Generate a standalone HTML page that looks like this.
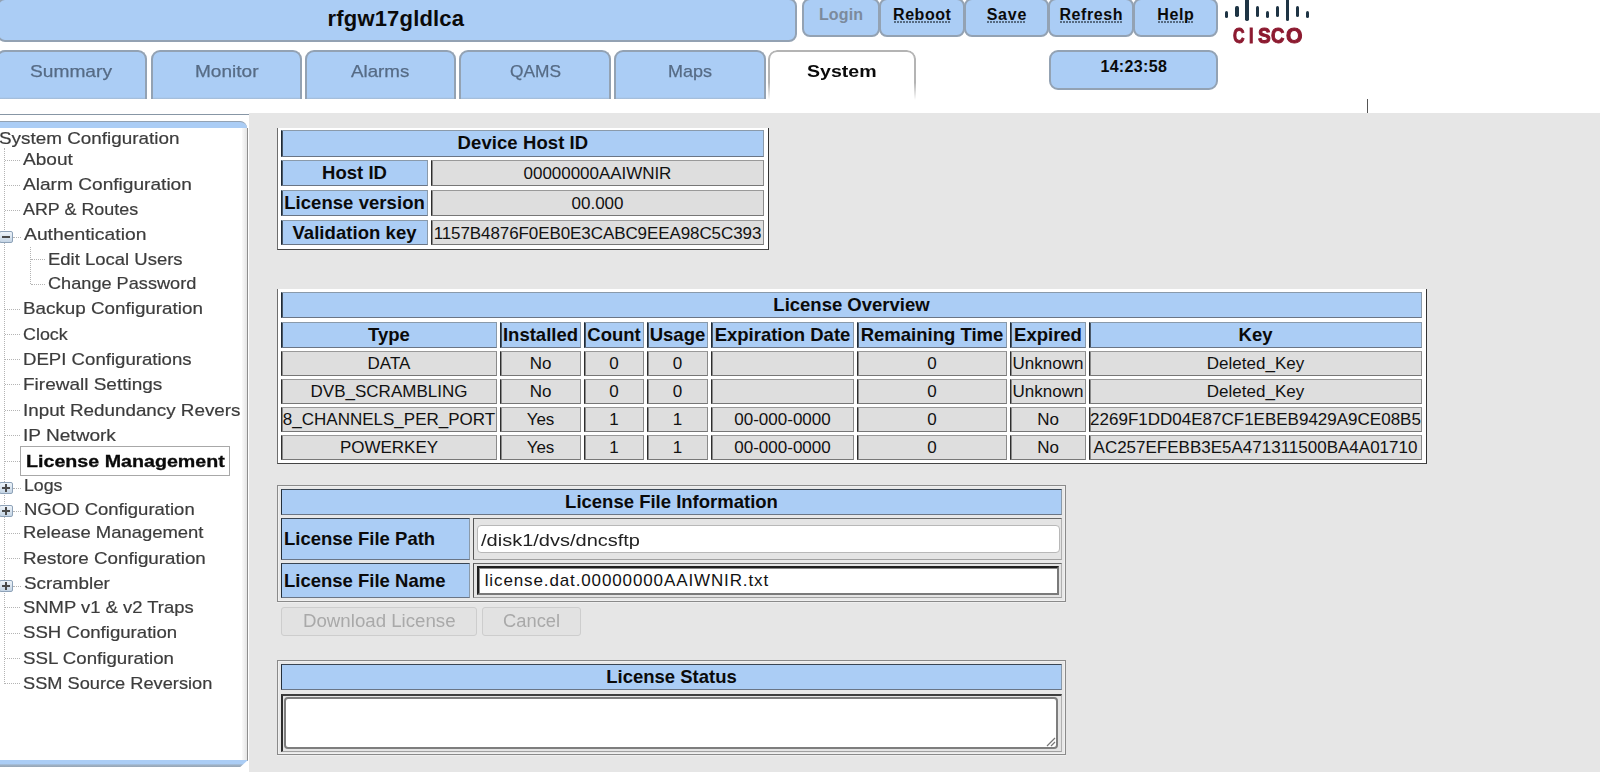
<!DOCTYPE html>
<html><head><meta charset="utf-8"><style>
html,body{margin:0;padding:0;}
body{width:1600px;height:772px;overflow:hidden;position:relative;background:#fff;font-family:"Liberation Sans", sans-serif;}
</style></head><body>
<div style="position:absolute;left:249px;top:113px;width:1351px;height:659px;box-sizing:border-box;background:#e6e6e6"></div>
<div style="position:absolute;left:-3px;top:-2px;width:800px;height:44px;box-sizing:border-box;background:#abcdf5;border:2px solid #93a2b3;border-radius:8px"></div>
<div style="position:absolute;left:802px;top:-2px;width:78px;height:39px;box-sizing:border-box;background:#abcdf5;border:2px solid #93a2b3;border-radius:8px"></div>
<div style="position:absolute;left:879px;top:-2px;width:86px;height:39px;box-sizing:border-box;background:#abcdf5;border:2px solid #93a2b3;border-radius:8px"></div>
<div style="position:absolute;left:894px;top:21px;width:57px;height:2px;background-image:linear-gradient(90deg,#3a4a5c 0,#3a4a5c 2px,transparent 2px);background-size:3px 2px;opacity:0.75"></div>
<div style="position:absolute;left:964px;top:-2px;width:85px;height:39px;box-sizing:border-box;background:#abcdf5;border:2px solid #93a2b3;border-radius:8px"></div>
<div style="position:absolute;left:987px;top:21px;width:39px;height:2px;background-image:linear-gradient(90deg,#3a4a5c 0,#3a4a5c 2px,transparent 2px);background-size:3px 2px;opacity:0.75"></div>
<div style="position:absolute;left:1048px;top:-2px;width:86px;height:39px;box-sizing:border-box;background:#abcdf5;border:2px solid #93a2b3;border-radius:8px"></div>
<div style="position:absolute;left:1060px;top:21px;width:62px;height:2px;background-image:linear-gradient(90deg,#3a4a5c 0,#3a4a5c 2px,transparent 2px);background-size:3px 2px;opacity:0.75"></div>
<div style="position:absolute;left:1133px;top:-2px;width:85px;height:39px;box-sizing:border-box;background:#abcdf5;border:2px solid #93a2b3;border-radius:8px"></div>
<div style="position:absolute;left:1158px;top:21px;width:36px;height:2px;background-image:linear-gradient(90deg,#3a4a5c 0,#3a4a5c 2px,transparent 2px);background-size:3px 2px;opacity:0.75"></div>
<div style="position:absolute;left:1049px;top:50px;width:169px;height:40px;box-sizing:border-box;background:#abcdf5;border:2px solid #93a2b3;border-radius:9px"></div>
<div style="position:absolute;left:1224.8px;top:11px;width:3.4px;height:6.5px;background:#1e3444;border-radius:1.7px"></div>
<div style="position:absolute;left:1235.3999999999999px;top:6.2px;width:3.4px;height:11.3px;background:#1e3444;border-radius:1.7px"></div>
<div style="position:absolute;left:1245.3999999999999px;top:-1px;width:3.4px;height:21.8px;background:#1e3444;border-radius:1.7px"></div>
<div style="position:absolute;left:1255.7px;top:6.2px;width:3.4px;height:11.3px;background:#1e3444;border-radius:1.7px"></div>
<div style="position:absolute;left:1265.7px;top:11px;width:3.4px;height:6.5px;background:#1e3444;border-radius:1.7px"></div>
<div style="position:absolute;left:1276.0px;top:6.2px;width:3.4px;height:11.3px;background:#1e3444;border-radius:1.7px"></div>
<div style="position:absolute;left:1286.0px;top:-1px;width:3.4px;height:21.8px;background:#1e3444;border-radius:1.7px"></div>
<div style="position:absolute;left:1295.8999999999999px;top:6.2px;width:3.4px;height:11.3px;background:#1e3444;border-radius:1.7px"></div>
<div style="position:absolute;left:1305.8999999999999px;top:11px;width:3.4px;height:6.5px;background:#1e3444;border-radius:1.7px"></div>
<div style="position:absolute;left:-4px;top:50px;width:151px;height:49px;box-sizing:border-box;background:linear-gradient(#abcdf5 0,#abcdf5 96%,#a3b9d2 100%);border:2px solid #93a2b3;border-bottom:none;border-radius:9px 9px 0 0"></div>
<div style="position:absolute;left:151px;top:50px;width:151px;height:49px;box-sizing:border-box;background:linear-gradient(#abcdf5 0,#abcdf5 96%,#a3b9d2 100%);border:2px solid #93a2b3;border-bottom:none;border-radius:9px 9px 0 0"></div>
<div style="position:absolute;left:305px;top:50px;width:151px;height:49px;box-sizing:border-box;background:linear-gradient(#abcdf5 0,#abcdf5 96%,#a3b9d2 100%);border:2px solid #93a2b3;border-bottom:none;border-radius:9px 9px 0 0"></div>
<div style="position:absolute;left:459px;top:50px;width:152px;height:49px;box-sizing:border-box;background:linear-gradient(#abcdf5 0,#abcdf5 96%,#a3b9d2 100%);border:2px solid #93a2b3;border-bottom:none;border-radius:9px 9px 0 0"></div>
<div style="position:absolute;left:614px;top:50px;width:152px;height:49px;box-sizing:border-box;background:linear-gradient(#abcdf5 0,#abcdf5 96%,#a3b9d2 100%);border:2px solid #93a2b3;border-bottom:none;border-radius:9px 9px 0 0"></div>
<div style="position:absolute;left:768px;top:50px;width:148px;height:50px;box-sizing:border-box;background:#fff;border:2px solid #b4b4b4;border-bottom:none;border-radius:9px 9px 0 0;-webkit-mask-image:linear-gradient(#000 65%,transparent 100%)"></div>
<div style="position:absolute;left:1367px;top:99px;width:1px;height:14px;box-sizing:border-box;background:#555"></div>
<div style="position:absolute;left:-2px;top:114px;width:251px;height:1px;box-sizing:border-box;background:#8796a5"></div>
<div style="position:absolute;left:-10px;top:121px;width:257px;height:7px;box-sizing:border-box;background:#abcdf5;border-top:1px solid #93a2b3;border-radius:0 7px 0 0"></div>
<div style="position:absolute;left:242px;top:128px;width:5px;height:633px;box-sizing:border-box;background:linear-gradient(90deg,#fafafa,#e4e4e4)"></div>
<div style="position:absolute;left:247px;top:128px;width:1px;height:633px;box-sizing:border-box;background:#8e8e8e"></div>
<div style="position:absolute;left:-10px;top:760px;width:258px;height:7px;background:linear-gradient(#abcdf5 0,#abcdf5 55%,#9fb2c6 70%,#97a6b6 100%);clip-path:polygon(0 0,100% 0,97% 100%,0 100%)"></div>
<div style="position:absolute;left:4px;top:148px;width:0;height:536px;border-left:1px dotted #b4b4b4"></div>
<div style="position:absolute;left:5px;top:159.5px;width:15px;height:0;border-top:1px dotted #b4b4b4"></div>
<div style="position:absolute;left:5px;top:184.60000000000002px;width:15px;height:0;border-top:1px dotted #b4b4b4"></div>
<div style="position:absolute;left:5px;top:209.70000000000002px;width:15px;height:0;border-top:1px dotted #b4b4b4"></div>
<div style="position:absolute;left:-1px;top:230.8px;width:14px;height:12px;box-sizing:border-box;border:1px solid #8ea2b8;border-radius:2px;background:linear-gradient(#eef4fa,#c4d4e4)"></div>
<div style="position:absolute;left:2px;top:235.8px;width:8px;height:2px;background:#4a4a4a"></div>
<div style="position:absolute;left:13px;top:236.8px;width:8px;height:0;border-top:1px dotted #b4b4b4"></div>
<div style="position:absolute;left:31px;top:259.1px;width:14px;height:0;border-top:1px dotted #b4b4b4"></div>
<div style="position:absolute;left:31px;top:283.7px;width:14px;height:0;border-top:1px dotted #b4b4b4"></div>
<div style="position:absolute;left:5px;top:308.8px;width:15px;height:0;border-top:1px dotted #b4b4b4"></div>
<div style="position:absolute;left:5px;top:334.3px;width:15px;height:0;border-top:1px dotted #b4b4b4"></div>
<div style="position:absolute;left:5px;top:359.0px;width:15px;height:0;border-top:1px dotted #b4b4b4"></div>
<div style="position:absolute;left:5px;top:384.1px;width:15px;height:0;border-top:1px dotted #b4b4b4"></div>
<div style="position:absolute;left:5px;top:410.3px;width:15px;height:0;border-top:1px dotted #b4b4b4"></div>
<div style="position:absolute;left:5px;top:435.40000000000003px;width:15px;height:0;border-top:1px dotted #b4b4b4"></div>
<div style="position:absolute;left:5px;top:460.5px;width:15px;height:0;border-top:1px dotted #b4b4b4"></div>
<div style="position:absolute;left:20px;top:446px;width:210px;height:30px;box-sizing:border-box;border:1px solid #a8a8a8;background:#fff"></div>
<div style="position:absolute;left:-1px;top:481.6px;width:14px;height:12px;box-sizing:border-box;border:1px solid #8ea2b8;border-radius:2px;background:linear-gradient(#eef4fa,#c4d4e4)"></div>
<div style="position:absolute;left:2px;top:486.6px;width:8px;height:2px;background:#4a4a4a"></div>
<div style="position:absolute;left:5px;top:483.6px;width:2px;height:8px;background:#4a4a4a"></div>
<div style="position:absolute;left:13px;top:487.6px;width:8px;height:0;border-top:1px dotted #b4b4b4"></div>
<div style="position:absolute;left:-1px;top:505.0999999999999px;width:14px;height:12px;box-sizing:border-box;border:1px solid #8ea2b8;border-radius:2px;background:linear-gradient(#eef4fa,#c4d4e4)"></div>
<div style="position:absolute;left:2px;top:510.0999999999999px;width:8px;height:2px;background:#4a4a4a"></div>
<div style="position:absolute;left:5px;top:507.0999999999999px;width:2px;height:8px;background:#4a4a4a"></div>
<div style="position:absolute;left:13px;top:511.0999999999999px;width:8px;height:0;border-top:1px dotted #b4b4b4"></div>
<div style="position:absolute;left:5px;top:532.9px;width:15px;height:0;border-top:1px dotted #b4b4b4"></div>
<div style="position:absolute;left:5px;top:558.0px;width:15px;height:0;border-top:1px dotted #b4b4b4"></div>
<div style="position:absolute;left:-1px;top:579.5999999999999px;width:14px;height:12px;box-sizing:border-box;border:1px solid #8ea2b8;border-radius:2px;background:linear-gradient(#eef4fa,#c4d4e4)"></div>
<div style="position:absolute;left:2px;top:584.5999999999999px;width:8px;height:2px;background:#4a4a4a"></div>
<div style="position:absolute;left:5px;top:581.5999999999999px;width:2px;height:8px;background:#4a4a4a"></div>
<div style="position:absolute;left:13px;top:585.5999999999999px;width:8px;height:0;border-top:1px dotted #b4b4b4"></div>
<div style="position:absolute;left:5px;top:607.3px;width:15px;height:0;border-top:1px dotted #b4b4b4"></div>
<div style="position:absolute;left:5px;top:632.6999999999999px;width:15px;height:0;border-top:1px dotted #b4b4b4"></div>
<div style="position:absolute;left:5px;top:658.0999999999999px;width:15px;height:0;border-top:1px dotted #b4b4b4"></div>
<div style="position:absolute;left:5px;top:683.1999999999999px;width:15px;height:0;border-top:1px dotted #b4b4b4"></div>
<div style="position:absolute;left:30px;top:247px;width:0;height:37px;border-left:1px dotted #b4b4b4"></div>
<div style="position:absolute;left:277px;top:128px;width:492px;height:122px;box-sizing:border-box;background:#fff;border-left:1px solid #6e6e6e;border-right:1px solid #333;border-bottom:1px solid #444"></div>
<div style="position:absolute;left:281px;top:130px;width:483px;height:27px;box-sizing:border-box;background:#abcdf5;border-left:1px solid #1e2a36;border-top:1px solid #8a9aaa;border-right:1px solid #8a9aaa;border-bottom:1px solid #6a7585;box-shadow:inset 1px 0 0 #4a5868"></div>
<div style="position:absolute;left:281px;top:160px;width:147px;height:26px;box-sizing:border-box;background:#abcdf5;border-left:1px solid #1e2a36;border-top:1px solid #8a9aaa;border-right:1px solid #8a9aaa;border-bottom:1px solid #6a7585;box-shadow:inset 1px 0 0 #4a5868"></div>
<div style="position:absolute;left:431px;top:160px;width:333px;height:26px;box-sizing:border-box;background:#dedede;border-left:1px solid #2e2e2e;border-top:1px solid #999;border-right:1px solid #8a8a8a;border-bottom:1px solid #777;box-shadow:inset 1px 0 0 #8a8a8a"></div>
<div style="position:absolute;left:281px;top:190px;width:147px;height:26px;box-sizing:border-box;background:#abcdf5;border-left:1px solid #1e2a36;border-top:1px solid #8a9aaa;border-right:1px solid #8a9aaa;border-bottom:1px solid #6a7585;box-shadow:inset 1px 0 0 #4a5868"></div>
<div style="position:absolute;left:431px;top:190px;width:333px;height:26px;box-sizing:border-box;background:#dedede;border-left:1px solid #2e2e2e;border-top:1px solid #999;border-right:1px solid #8a8a8a;border-bottom:1px solid #777;box-shadow:inset 1px 0 0 #8a8a8a"></div>
<div style="position:absolute;left:281px;top:220px;width:147px;height:25px;box-sizing:border-box;background:#abcdf5;border-left:1px solid #1e2a36;border-top:1px solid #8a9aaa;border-right:1px solid #8a9aaa;border-bottom:1px solid #6a7585;box-shadow:inset 1px 0 0 #4a5868"></div>
<div style="position:absolute;left:431px;top:220px;width:333px;height:25px;box-sizing:border-box;background:#dedede;border-left:1px solid #2e2e2e;border-top:1px solid #999;border-right:1px solid #8a8a8a;border-bottom:1px solid #777;box-shadow:inset 1px 0 0 #8a8a8a"></div>
<div style="position:absolute;left:277px;top:289px;width:1150px;height:175px;box-sizing:border-box;background:#fff;border-left:1px solid #6e6e6e;border-right:1px solid #333;border-bottom:1px solid #444"></div>
<div style="position:absolute;left:281px;top:292px;width:1141px;height:26px;box-sizing:border-box;background:#abcdf5;border-left:1px solid #1e2a36;border-top:1px solid #8a9aaa;border-right:1px solid #8a9aaa;border-bottom:1px solid #6a7585;box-shadow:inset 1px 0 0 #4a5868"></div>
<div style="position:absolute;left:281px;top:322px;width:216px;height:26px;box-sizing:border-box;background:#abcdf5;border-left:1px solid #1e2a36;border-top:1px solid #8a9aaa;border-right:1px solid #8a9aaa;border-bottom:1px solid #6a7585;box-shadow:inset 1px 0 0 #4a5868"></div>
<div style="position:absolute;left:500px;top:322px;width:81px;height:26px;box-sizing:border-box;background:#abcdf5;border-left:1px solid #1e2a36;border-top:1px solid #8a9aaa;border-right:1px solid #8a9aaa;border-bottom:1px solid #6a7585;box-shadow:inset 1px 0 0 #4a5868"></div>
<div style="position:absolute;left:584px;top:322px;width:60px;height:26px;box-sizing:border-box;background:#abcdf5;border-left:1px solid #1e2a36;border-top:1px solid #8a9aaa;border-right:1px solid #8a9aaa;border-bottom:1px solid #6a7585;box-shadow:inset 1px 0 0 #4a5868"></div>
<div style="position:absolute;left:647px;top:322px;width:61px;height:26px;box-sizing:border-box;background:#abcdf5;border-left:1px solid #1e2a36;border-top:1px solid #8a9aaa;border-right:1px solid #8a9aaa;border-bottom:1px solid #6a7585;box-shadow:inset 1px 0 0 #4a5868"></div>
<div style="position:absolute;left:711px;top:322px;width:143px;height:26px;box-sizing:border-box;background:#abcdf5;border-left:1px solid #1e2a36;border-top:1px solid #8a9aaa;border-right:1px solid #8a9aaa;border-bottom:1px solid #6a7585;box-shadow:inset 1px 0 0 #4a5868"></div>
<div style="position:absolute;left:857px;top:322px;width:150px;height:26px;box-sizing:border-box;background:#abcdf5;border-left:1px solid #1e2a36;border-top:1px solid #8a9aaa;border-right:1px solid #8a9aaa;border-bottom:1px solid #6a7585;box-shadow:inset 1px 0 0 #4a5868"></div>
<div style="position:absolute;left:1010px;top:322px;width:76px;height:26px;box-sizing:border-box;background:#abcdf5;border-left:1px solid #1e2a36;border-top:1px solid #8a9aaa;border-right:1px solid #8a9aaa;border-bottom:1px solid #6a7585;box-shadow:inset 1px 0 0 #4a5868"></div>
<div style="position:absolute;left:1089px;top:322px;width:333px;height:26px;box-sizing:border-box;background:#abcdf5;border-left:1px solid #1e2a36;border-top:1px solid #8a9aaa;border-right:1px solid #8a9aaa;border-bottom:1px solid #6a7585;box-shadow:inset 1px 0 0 #4a5868"></div>
<div style="position:absolute;left:281px;top:351px;width:216px;height:25px;box-sizing:border-box;background:#dedede;border-left:1px solid #2e2e2e;border-top:1px solid #999;border-right:1px solid #8a8a8a;border-bottom:1px solid #777;box-shadow:inset 1px 0 0 #8a8a8a"></div>
<div style="position:absolute;left:500px;top:351px;width:81px;height:25px;box-sizing:border-box;background:#dedede;border-left:1px solid #2e2e2e;border-top:1px solid #999;border-right:1px solid #8a8a8a;border-bottom:1px solid #777;box-shadow:inset 1px 0 0 #8a8a8a"></div>
<div style="position:absolute;left:584px;top:351px;width:60px;height:25px;box-sizing:border-box;background:#dedede;border-left:1px solid #2e2e2e;border-top:1px solid #999;border-right:1px solid #8a8a8a;border-bottom:1px solid #777;box-shadow:inset 1px 0 0 #8a8a8a"></div>
<div style="position:absolute;left:647px;top:351px;width:61px;height:25px;box-sizing:border-box;background:#dedede;border-left:1px solid #2e2e2e;border-top:1px solid #999;border-right:1px solid #8a8a8a;border-bottom:1px solid #777;box-shadow:inset 1px 0 0 #8a8a8a"></div>
<div style="position:absolute;left:711px;top:351px;width:143px;height:25px;box-sizing:border-box;background:#dedede;border-left:1px solid #2e2e2e;border-top:1px solid #999;border-right:1px solid #8a8a8a;border-bottom:1px solid #777;box-shadow:inset 1px 0 0 #8a8a8a"></div>
<div style="position:absolute;left:857px;top:351px;width:150px;height:25px;box-sizing:border-box;background:#dedede;border-left:1px solid #2e2e2e;border-top:1px solid #999;border-right:1px solid #8a8a8a;border-bottom:1px solid #777;box-shadow:inset 1px 0 0 #8a8a8a"></div>
<div style="position:absolute;left:1010px;top:351px;width:76px;height:25px;box-sizing:border-box;background:#dedede;border-left:1px solid #2e2e2e;border-top:1px solid #999;border-right:1px solid #8a8a8a;border-bottom:1px solid #777;box-shadow:inset 1px 0 0 #8a8a8a"></div>
<div style="position:absolute;left:1089px;top:351px;width:333px;height:25px;box-sizing:border-box;background:#dedede;border-left:1px solid #2e2e2e;border-top:1px solid #999;border-right:1px solid #8a8a8a;border-bottom:1px solid #777;box-shadow:inset 1px 0 0 #8a8a8a"></div>
<div style="position:absolute;left:281px;top:379px;width:216px;height:25px;box-sizing:border-box;background:#dedede;border-left:1px solid #2e2e2e;border-top:1px solid #999;border-right:1px solid #8a8a8a;border-bottom:1px solid #777;box-shadow:inset 1px 0 0 #8a8a8a"></div>
<div style="position:absolute;left:500px;top:379px;width:81px;height:25px;box-sizing:border-box;background:#dedede;border-left:1px solid #2e2e2e;border-top:1px solid #999;border-right:1px solid #8a8a8a;border-bottom:1px solid #777;box-shadow:inset 1px 0 0 #8a8a8a"></div>
<div style="position:absolute;left:584px;top:379px;width:60px;height:25px;box-sizing:border-box;background:#dedede;border-left:1px solid #2e2e2e;border-top:1px solid #999;border-right:1px solid #8a8a8a;border-bottom:1px solid #777;box-shadow:inset 1px 0 0 #8a8a8a"></div>
<div style="position:absolute;left:647px;top:379px;width:61px;height:25px;box-sizing:border-box;background:#dedede;border-left:1px solid #2e2e2e;border-top:1px solid #999;border-right:1px solid #8a8a8a;border-bottom:1px solid #777;box-shadow:inset 1px 0 0 #8a8a8a"></div>
<div style="position:absolute;left:711px;top:379px;width:143px;height:25px;box-sizing:border-box;background:#dedede;border-left:1px solid #2e2e2e;border-top:1px solid #999;border-right:1px solid #8a8a8a;border-bottom:1px solid #777;box-shadow:inset 1px 0 0 #8a8a8a"></div>
<div style="position:absolute;left:857px;top:379px;width:150px;height:25px;box-sizing:border-box;background:#dedede;border-left:1px solid #2e2e2e;border-top:1px solid #999;border-right:1px solid #8a8a8a;border-bottom:1px solid #777;box-shadow:inset 1px 0 0 #8a8a8a"></div>
<div style="position:absolute;left:1010px;top:379px;width:76px;height:25px;box-sizing:border-box;background:#dedede;border-left:1px solid #2e2e2e;border-top:1px solid #999;border-right:1px solid #8a8a8a;border-bottom:1px solid #777;box-shadow:inset 1px 0 0 #8a8a8a"></div>
<div style="position:absolute;left:1089px;top:379px;width:333px;height:25px;box-sizing:border-box;background:#dedede;border-left:1px solid #2e2e2e;border-top:1px solid #999;border-right:1px solid #8a8a8a;border-bottom:1px solid #777;box-shadow:inset 1px 0 0 #8a8a8a"></div>
<div style="position:absolute;left:281px;top:407px;width:216px;height:25px;box-sizing:border-box;background:#dedede;border-left:1px solid #2e2e2e;border-top:1px solid #999;border-right:1px solid #8a8a8a;border-bottom:1px solid #777;box-shadow:inset 1px 0 0 #8a8a8a"></div>
<div style="position:absolute;left:500px;top:407px;width:81px;height:25px;box-sizing:border-box;background:#dedede;border-left:1px solid #2e2e2e;border-top:1px solid #999;border-right:1px solid #8a8a8a;border-bottom:1px solid #777;box-shadow:inset 1px 0 0 #8a8a8a"></div>
<div style="position:absolute;left:584px;top:407px;width:60px;height:25px;box-sizing:border-box;background:#dedede;border-left:1px solid #2e2e2e;border-top:1px solid #999;border-right:1px solid #8a8a8a;border-bottom:1px solid #777;box-shadow:inset 1px 0 0 #8a8a8a"></div>
<div style="position:absolute;left:647px;top:407px;width:61px;height:25px;box-sizing:border-box;background:#dedede;border-left:1px solid #2e2e2e;border-top:1px solid #999;border-right:1px solid #8a8a8a;border-bottom:1px solid #777;box-shadow:inset 1px 0 0 #8a8a8a"></div>
<div style="position:absolute;left:711px;top:407px;width:143px;height:25px;box-sizing:border-box;background:#dedede;border-left:1px solid #2e2e2e;border-top:1px solid #999;border-right:1px solid #8a8a8a;border-bottom:1px solid #777;box-shadow:inset 1px 0 0 #8a8a8a"></div>
<div style="position:absolute;left:857px;top:407px;width:150px;height:25px;box-sizing:border-box;background:#dedede;border-left:1px solid #2e2e2e;border-top:1px solid #999;border-right:1px solid #8a8a8a;border-bottom:1px solid #777;box-shadow:inset 1px 0 0 #8a8a8a"></div>
<div style="position:absolute;left:1010px;top:407px;width:76px;height:25px;box-sizing:border-box;background:#dedede;border-left:1px solid #2e2e2e;border-top:1px solid #999;border-right:1px solid #8a8a8a;border-bottom:1px solid #777;box-shadow:inset 1px 0 0 #8a8a8a"></div>
<div style="position:absolute;left:1089px;top:407px;width:333px;height:25px;box-sizing:border-box;background:#dedede;border-left:1px solid #2e2e2e;border-top:1px solid #999;border-right:1px solid #8a8a8a;border-bottom:1px solid #777;box-shadow:inset 1px 0 0 #8a8a8a"></div>
<div style="position:absolute;left:281px;top:435px;width:216px;height:25px;box-sizing:border-box;background:#dedede;border-left:1px solid #2e2e2e;border-top:1px solid #999;border-right:1px solid #8a8a8a;border-bottom:1px solid #777;box-shadow:inset 1px 0 0 #8a8a8a"></div>
<div style="position:absolute;left:500px;top:435px;width:81px;height:25px;box-sizing:border-box;background:#dedede;border-left:1px solid #2e2e2e;border-top:1px solid #999;border-right:1px solid #8a8a8a;border-bottom:1px solid #777;box-shadow:inset 1px 0 0 #8a8a8a"></div>
<div style="position:absolute;left:584px;top:435px;width:60px;height:25px;box-sizing:border-box;background:#dedede;border-left:1px solid #2e2e2e;border-top:1px solid #999;border-right:1px solid #8a8a8a;border-bottom:1px solid #777;box-shadow:inset 1px 0 0 #8a8a8a"></div>
<div style="position:absolute;left:647px;top:435px;width:61px;height:25px;box-sizing:border-box;background:#dedede;border-left:1px solid #2e2e2e;border-top:1px solid #999;border-right:1px solid #8a8a8a;border-bottom:1px solid #777;box-shadow:inset 1px 0 0 #8a8a8a"></div>
<div style="position:absolute;left:711px;top:435px;width:143px;height:25px;box-sizing:border-box;background:#dedede;border-left:1px solid #2e2e2e;border-top:1px solid #999;border-right:1px solid #8a8a8a;border-bottom:1px solid #777;box-shadow:inset 1px 0 0 #8a8a8a"></div>
<div style="position:absolute;left:857px;top:435px;width:150px;height:25px;box-sizing:border-box;background:#dedede;border-left:1px solid #2e2e2e;border-top:1px solid #999;border-right:1px solid #8a8a8a;border-bottom:1px solid #777;box-shadow:inset 1px 0 0 #8a8a8a"></div>
<div style="position:absolute;left:1010px;top:435px;width:76px;height:25px;box-sizing:border-box;background:#dedede;border-left:1px solid #2e2e2e;border-top:1px solid #999;border-right:1px solid #8a8a8a;border-bottom:1px solid #777;box-shadow:inset 1px 0 0 #8a8a8a"></div>
<div style="position:absolute;left:1089px;top:435px;width:333px;height:25px;box-sizing:border-box;background:#dedede;border-left:1px solid #2e2e2e;border-top:1px solid #999;border-right:1px solid #8a8a8a;border-bottom:1px solid #777;box-shadow:inset 1px 0 0 #8a8a8a"></div>
<div style="position:absolute;left:277px;top:485px;width:789px;height:117px;box-sizing:border-box;background:#e8e8e8;border:1px solid #8a8a8a;box-shadow:inset 1px 1px 0 #f0f0f0, inset -1px -1px 0 #f0f0f0, 0 1px 0 #efefef"></div>
<div style="position:absolute;left:281px;top:489px;width:781px;height:26px;box-sizing:border-box;background:#abcdf5;border-left:1px solid #24303c;border-top:1px solid #3a4654;border-right:1px solid #8a9aaa;border-bottom:1px solid #6a7585"></div>
<div style="position:absolute;left:281px;top:518px;width:189px;height:42px;box-sizing:border-box;background:#abcdf5;border-left:1px solid #24303c;border-top:1px solid #3a4654;border-right:1px solid #8a9aaa;border-bottom:1px solid #6a7585"></div>
<div style="position:absolute;left:473px;top:518px;width:589px;height:42px;box-sizing:border-box;background:#e4e4e4;border-left:1px solid #555;border-top:1px solid #666;border-right:1px solid #b0b0b0;border-bottom:1px solid #a0a0a0"></div>
<div style="position:absolute;left:281px;top:563px;width:189px;height:35px;box-sizing:border-box;background:#abcdf5;border-left:1px solid #24303c;border-top:1px solid #3a4654;border-right:1px solid #8a9aaa;border-bottom:1px solid #6a7585"></div>
<div style="position:absolute;left:473px;top:563px;width:589px;height:35px;box-sizing:border-box;background:#e4e4e4;border-left:1px solid #555;border-top:1px solid #666;border-right:1px solid #b0b0b0;border-bottom:1px solid #a0a0a0"></div>
<div style="position:absolute;left:477px;top:525px;width:583px;height:28px;box-sizing:border-box;background:#fff;border:1px solid #b8b8b8;border-radius:4px"></div>
<div style="position:absolute;left:477px;top:566px;width:582px;height:29px;box-sizing:border-box;background:#fff;border-top:2px solid #1e1e1e;border-left:2px solid #1e1e1e;border-right:2px solid #7a7a7a;border-bottom:2px solid #7a7a7a;box-shadow:inset 1px 1px 0 #888"></div>
<div style="position:absolute;left:281px;top:607px;width:196px;height:29px;box-sizing:border-box;background:#e2e2e2;border:1px solid #cdcdcd;border-radius:3px"></div>
<div style="position:absolute;left:482px;top:607px;width:99px;height:29px;box-sizing:border-box;background:#e2e2e2;border:1px solid #cdcdcd;border-radius:3px"></div>
<div style="position:absolute;left:277px;top:660px;width:789px;height:95px;box-sizing:border-box;background:#e8e8e8;border:1px solid #8a8a8a;box-shadow:inset 1px 1px 0 #f0f0f0, inset -1px -1px 0 #f0f0f0, 0 1px 0 #efefef"></div>
<div style="position:absolute;left:281px;top:664px;width:781px;height:26px;box-sizing:border-box;background:#abcdf5;border-left:1px solid #24303c;border-top:1px solid #3a4654;border-right:1px solid #8a9aaa;border-bottom:1px solid #6a7585"></div>
<div style="position:absolute;left:281px;top:694px;width:781px;height:58px;box-sizing:border-box;background:#e4e4e4;border-left:2px solid #2e2e2e;border-top:2px solid #3e3e3e;border-right:1px solid #b0b0b0;border-bottom:1px solid #a0a0a0"></div>
<div style="position:absolute;left:284px;top:697px;width:774px;height:52px;box-sizing:border-box;background:#fff;border:2px solid #7e7e7e;border-radius:4px"></div>
<svg style="position:absolute;left:1046px;top:737px" width="10" height="10"><path d="M1 9 L9 1 M5 9 L9 5" stroke="#777" stroke-width="1.2"/></svg>
<div style="position:absolute;left:327.50px;top:18.50px;line-height:0;white-space:pre;font-size:22px;font-weight:bold;color:#0a0a0a;letter-spacing:0.183px;">rfgw17gldlca</div>
<div style="position:absolute;left:818.90px;top:14.50px;line-height:0;white-space:pre;font-size:16px;font-weight:bold;color:#7b8a9c;letter-spacing:0.163px;">Login</div>
<div style="position:absolute;left:893.05px;top:14.50px;line-height:0;white-space:pre;font-size:16px;font-weight:bold;color:#0a0a0a;letter-spacing:0.558px;">Reboot</div>
<div style="position:absolute;left:986.70px;top:14.50px;line-height:0;white-space:pre;font-size:16px;font-weight:bold;color:#0a0a0a;letter-spacing:0.742px;">Save</div>
<div style="position:absolute;left:1059.40px;top:14.50px;line-height:0;white-space:pre;font-size:16px;font-weight:bold;color:#0a0a0a;letter-spacing:0.604px;">Refresh</div>
<div style="position:absolute;left:1157.25px;top:14.50px;line-height:0;white-space:pre;font-size:16px;font-weight:bold;color:#0a0a0a;letter-spacing:0.609px;">Help</div>
<div style="position:absolute;left:1100.40px;top:67.00px;line-height:0;white-space:pre;font-size:16px;font-weight:bold;color:#0a0a0a;letter-spacing:0.336px;">14:23:58</div>
<div style="position:absolute;left:1232.50px;top:36.00px;line-height:0;white-space:pre;font-size:21.5px;font-weight:bold;color:#8c1a30;letter-spacing:0.000px;transform:scaleX(0.7469);transform-origin:0 0;-webkit-text-stroke:1px #8c1a30">C</div>
<div style="position:absolute;left:1248.70px;top:36.00px;line-height:0;white-space:pre;font-size:21.5px;font-weight:bold;color:#8c1a30;letter-spacing:0.000px;transform:scaleX(0.7352);transform-origin:0 0;-webkit-text-stroke:1px #8c1a30">I</div>
<div style="position:absolute;left:1257.60px;top:36.00px;line-height:0;white-space:pre;font-size:21.5px;font-weight:bold;color:#8c1a30;letter-spacing:0.000px;transform:scaleX(0.8854);transform-origin:0 0;-webkit-text-stroke:1px #8c1a30">S</div>
<div style="position:absolute;left:1271.30px;top:36.00px;line-height:0;white-space:pre;font-size:21.5px;font-weight:bold;color:#8c1a30;letter-spacing:0.000px;transform:scaleX(0.8628);transform-origin:0 0;-webkit-text-stroke:1px #8c1a30">C</div>
<div style="position:absolute;left:1286.45px;top:36.00px;line-height:0;white-space:pre;font-size:21.5px;font-weight:bold;color:#8c1a30;letter-spacing:0.000px;transform:scaleX(0.9860);transform-origin:0 0;-webkit-text-stroke:1px #8c1a30">O</div>
<div style="position:absolute;left:29.50px;top:71.50px;line-height:0;white-space:pre;font-size:17px;font-weight:normal;color:#566b85;letter-spacing:0.000px;transform:scaleX(1.1274);transform-origin:0 0;-webkit-text-stroke:0.25px #566b85">Summary</div>
<div style="position:absolute;left:194.75px;top:71.50px;line-height:0;white-space:pre;font-size:17px;font-weight:normal;color:#566b85;letter-spacing:0.000px;transform:scaleX(1.1202);transform-origin:0 0;-webkit-text-stroke:0.25px #566b85">Monitor</div>
<div style="position:absolute;left:351.38px;top:71.50px;line-height:0;white-space:pre;font-size:17px;font-weight:normal;color:#566b85;letter-spacing:0.000px;transform:scaleX(1.1010);transform-origin:0 0;-webkit-text-stroke:0.25px #566b85">Alarms</div>
<div style="position:absolute;left:509.50px;top:71.50px;line-height:0;white-space:pre;font-size:17px;font-weight:normal;color:#566b85;letter-spacing:0.000px;transform:scaleX(1.0187);transform-origin:0 0;-webkit-text-stroke:0.25px #566b85">QAMS</div>
<div style="position:absolute;left:668.00px;top:71.50px;line-height:0;white-space:pre;font-size:17px;font-weight:normal;color:#566b85;letter-spacing:0.000px;transform:scaleX(1.0582);transform-origin:0 0;-webkit-text-stroke:0.25px #566b85">Maps</div>
<div style="position:absolute;left:806.90px;top:71.50px;line-height:0;white-space:pre;font-size:17px;font-weight:bold;color:#0a0a0a;letter-spacing:0.000px;transform:scaleX(1.1507);transform-origin:0 0;">System</div>
<div style="position:absolute;left:-1.06px;top:138.60px;line-height:0;white-space:pre;font-size:17px;font-weight:normal;color:#3c3c3c;letter-spacing:0.000px;transform:scaleX(1.1106);transform-origin:0 0;-webkit-text-stroke:0.2px #3c3c3c">System Configuration</div>
<div style="position:absolute;left:22.54px;top:160.00px;line-height:0;white-space:pre;font-size:17px;font-weight:normal;color:#3c3c3c;letter-spacing:0.000px;transform:scaleX(1.1207);transform-origin:0 0;-webkit-text-stroke:0.2px #3c3c3c">About</div>
<div style="position:absolute;left:22.54px;top:185.10px;line-height:0;white-space:pre;font-size:17px;font-weight:normal;color:#3c3c3c;letter-spacing:0.000px;transform:scaleX(1.1241);transform-origin:0 0;-webkit-text-stroke:0.2px #3c3c3c">Alarm Configuration</div>
<div style="position:absolute;left:22.57px;top:210.20px;line-height:0;white-space:pre;font-size:17px;font-weight:normal;color:#3c3c3c;letter-spacing:0.000px;transform:scaleX(1.0531);transform-origin:0 0;-webkit-text-stroke:0.2px #3c3c3c">ARP &amp; Routes</div>
<div style="position:absolute;left:23.73px;top:235.30px;line-height:0;white-space:pre;font-size:17px;font-weight:normal;color:#3c3c3c;letter-spacing:0.000px;transform:scaleX(1.1360);transform-origin:0 0;-webkit-text-stroke:0.2px #3c3c3c">Authentication</div>
<div style="position:absolute;left:48.06px;top:259.60px;line-height:0;white-space:pre;font-size:17px;font-weight:normal;color:#3c3c3c;letter-spacing:0.000px;transform:scaleX(1.0874);transform-origin:0 0;-webkit-text-stroke:0.2px #3c3c3c">Edit Local Users</div>
<div style="position:absolute;left:48.07px;top:284.20px;line-height:0;white-space:pre;font-size:17px;font-weight:normal;color:#3c3c3c;letter-spacing:0.000px;transform:scaleX(1.0675);transform-origin:0 0;-webkit-text-stroke:0.2px #3c3c3c">Change Password</div>
<div style="position:absolute;left:22.95px;top:309.30px;line-height:0;white-space:pre;font-size:17px;font-weight:normal;color:#3c3c3c;letter-spacing:0.000px;transform:scaleX(1.1068);transform-origin:0 0;-webkit-text-stroke:0.2px #3c3c3c">Backup Configuration</div>
<div style="position:absolute;left:22.97px;top:334.80px;line-height:0;white-space:pre;font-size:17px;font-weight:normal;color:#3c3c3c;letter-spacing:0.000px;transform:scaleX(1.0514);transform-origin:0 0;-webkit-text-stroke:0.2px #3c3c3c">Clock</div>
<div style="position:absolute;left:22.85px;top:359.50px;line-height:0;white-space:pre;font-size:17px;font-weight:normal;color:#3c3c3c;letter-spacing:0.000px;transform:scaleX(1.0946);transform-origin:0 0;-webkit-text-stroke:0.2px #3c3c3c">DEPI Configurations</div>
<div style="position:absolute;left:22.84px;top:384.60px;line-height:0;white-space:pre;font-size:17px;font-weight:normal;color:#3c3c3c;letter-spacing:0.000px;transform:scaleX(1.1169);transform-origin:0 0;-webkit-text-stroke:0.2px #3c3c3c">Firewall Settings</div>
<div style="position:absolute;left:22.85px;top:410.80px;line-height:0;white-space:pre;font-size:17px;font-weight:normal;color:#3c3c3c;letter-spacing:0.000px;transform:scaleX(1.1060);transform-origin:0 0;-webkit-text-stroke:0.2px #3c3c3c">Input Redundancy Revers</div>
<div style="position:absolute;left:22.84px;top:435.90px;line-height:0;white-space:pre;font-size:17px;font-weight:normal;color:#3c3c3c;letter-spacing:0.000px;transform:scaleX(1.1216);transform-origin:0 0;-webkit-text-stroke:0.2px #3c3c3c">IP Network</div>
<div style="position:absolute;left:25.62px;top:461.50px;line-height:0;white-space:pre;font-size:17px;font-weight:bold;color:#0a0a0a;letter-spacing:0.000px;transform:scaleX(1.1561);transform-origin:0 0;-webkit-text-stroke:0.3px #0a0a0a">License Management</div>
<div style="position:absolute;left:24.18px;top:486.10px;line-height:0;white-space:pre;font-size:17px;font-weight:normal;color:#3c3c3c;letter-spacing:0.000px;transform:scaleX(1.0441);transform-origin:0 0;-webkit-text-stroke:0.2px #3c3c3c">Logs</div>
<div style="position:absolute;left:23.96px;top:509.60px;line-height:0;white-space:pre;font-size:17px;font-weight:normal;color:#3c3c3c;letter-spacing:0.000px;transform:scaleX(1.0883);transform-origin:0 0;-webkit-text-stroke:0.2px #3c3c3c">NGOD Configuration</div>
<div style="position:absolute;left:22.86px;top:533.40px;line-height:0;white-space:pre;font-size:17px;font-weight:normal;color:#3c3c3c;letter-spacing:0.000px;transform:scaleX(1.0846);transform-origin:0 0;-webkit-text-stroke:0.2px #3c3c3c">Release Management</div>
<div style="position:absolute;left:22.85px;top:558.50px;line-height:0;white-space:pre;font-size:17px;font-weight:normal;color:#3c3c3c;letter-spacing:0.000px;transform:scaleX(1.1054);transform-origin:0 0;-webkit-text-stroke:0.2px #3c3c3c">Restore Configuration</div>
<div style="position:absolute;left:23.95px;top:584.10px;line-height:0;white-space:pre;font-size:17px;font-weight:normal;color:#3c3c3c;letter-spacing:0.000px;transform:scaleX(1.1088);transform-origin:0 0;-webkit-text-stroke:0.2px #3c3c3c">Scrambler</div>
<div style="position:absolute;left:22.86px;top:607.80px;line-height:0;white-space:pre;font-size:17px;font-weight:normal;color:#3c3c3c;letter-spacing:0.000px;transform:scaleX(1.0834);transform-origin:0 0;-webkit-text-stroke:0.2px #3c3c3c">SNMP v1 &amp; v2 Traps</div>
<div style="position:absolute;left:22.85px;top:633.20px;line-height:0;white-space:pre;font-size:17px;font-weight:normal;color:#3c3c3c;letter-spacing:0.000px;transform:scaleX(1.0951);transform-origin:0 0;-webkit-text-stroke:0.2px #3c3c3c">SSH Configuration</div>
<div style="position:absolute;left:22.85px;top:658.60px;line-height:0;white-space:pre;font-size:17px;font-weight:normal;color:#3c3c3c;letter-spacing:0.000px;transform:scaleX(1.0993);transform-origin:0 0;-webkit-text-stroke:0.2px #3c3c3c">SSL Configuration</div>
<div style="position:absolute;left:22.86px;top:683.70px;line-height:0;white-space:pre;font-size:17px;font-weight:normal;color:#3c3c3c;letter-spacing:0.000px;transform:scaleX(1.0714);transform-origin:0 0;-webkit-text-stroke:0.2px #3c3c3c">SSM Source Reversion</div>
<div style="position:absolute;left:457.60px;top:143.20px;line-height:0;white-space:pre;font-size:18.5px;font-weight:bold;color:#0a0a0a;letter-spacing:0.081px;">Device Host ID</div>
<div style="position:absolute;left:322.10px;top:172.70px;line-height:0;white-space:pre;font-size:18.5px;font-weight:bold;color:#0a0a0a;letter-spacing:0.008px;">Host ID</div>
<div style="position:absolute;left:523.60px;top:173.80px;line-height:0;white-space:pre;font-size:17px;font-weight:normal;color:#111;letter-spacing:-0.041px;">00000000AAIWNIR</div>
<div style="position:absolute;left:284.20px;top:202.70px;line-height:0;white-space:pre;font-size:18.5px;font-weight:bold;color:#0a0a0a;letter-spacing:0.054px;">License version</div>
<div style="position:absolute;left:571.50px;top:203.80px;line-height:0;white-space:pre;font-size:17px;font-weight:normal;color:#111;letter-spacing:0.000px;">00.000</div>
<div style="position:absolute;left:292.45px;top:232.70px;line-height:0;white-space:pre;font-size:18.5px;font-weight:bold;color:#0a0a0a;letter-spacing:0.055px;">Validation key</div>
<div style="position:absolute;left:433.65px;top:233.80px;line-height:0;white-space:pre;font-size:17px;font-weight:normal;color:#111;letter-spacing:-0.089px;">1157B4876F0EB0E3CABC9EEA98C5C393</div>
<div style="position:absolute;left:773.34px;top:304.50px;line-height:0;white-space:pre;font-size:18.5px;font-weight:bold;color:#0a0a0a;letter-spacing:0.000px;">License Overview</div>
<div style="position:absolute;left:368.09px;top:334.50px;line-height:0;white-space:pre;font-size:18.5px;font-weight:bold;color:#0a0a0a;letter-spacing:0.000px;">Type</div>
<div style="position:absolute;left:502.97px;top:334.50px;line-height:0;white-space:pre;font-size:18.5px;font-weight:bold;color:#0a0a0a;letter-spacing:0.000px;">Installed</div>
<div style="position:absolute;left:587.28px;top:334.50px;line-height:0;white-space:pre;font-size:18.5px;font-weight:bold;color:#0a0a0a;letter-spacing:0.000px;">Count</div>
<div style="position:absolute;left:649.73px;top:334.50px;line-height:0;white-space:pre;font-size:18.5px;font-weight:bold;color:#0a0a0a;letter-spacing:0.000px;">Usage</div>
<div style="position:absolute;left:714.65px;top:334.50px;line-height:0;white-space:pre;font-size:18.5px;font-weight:bold;color:#0a0a0a;letter-spacing:0.000px;">Expiration Date</div>
<div style="position:absolute;left:860.72px;top:334.50px;line-height:0;white-space:pre;font-size:18.5px;font-weight:bold;color:#0a0a0a;letter-spacing:0.000px;">Remaining Time</div>
<div style="position:absolute;left:1014.07px;top:334.50px;line-height:0;white-space:pre;font-size:18.5px;font-weight:bold;color:#0a0a0a;letter-spacing:0.000px;">Expired</div>
<div style="position:absolute;left:1238.52px;top:334.50px;line-height:0;white-space:pre;font-size:18.5px;font-weight:bold;color:#0a0a0a;letter-spacing:0.000px;">Key</div>
<div style="position:absolute;left:367.59px;top:363.50px;line-height:0;white-space:pre;font-size:17px;font-weight:normal;color:#111;letter-spacing:0.000px;">DATA</div>
<div style="position:absolute;left:529.63px;top:363.50px;line-height:0;white-space:pre;font-size:17px;font-weight:normal;color:#111;letter-spacing:0.000px;">No</div>
<div style="position:absolute;left:609.27px;top:363.50px;line-height:0;white-space:pre;font-size:17px;font-weight:normal;color:#111;letter-spacing:0.000px;">0</div>
<div style="position:absolute;left:672.77px;top:363.50px;line-height:0;white-space:pre;font-size:17px;font-weight:normal;color:#111;letter-spacing:0.000px;">0</div>
<div style="position:absolute;left:927.27px;top:363.50px;line-height:0;white-space:pre;font-size:17px;font-weight:normal;color:#111;letter-spacing:0.000px;">0</div>
<div style="position:absolute;left:1012.56px;top:363.50px;line-height:0;white-space:pre;font-size:17px;font-weight:normal;color:#111;letter-spacing:0.000px;">Unknown</div>
<div style="position:absolute;left:1206.83px;top:363.50px;line-height:0;white-space:pre;font-size:17px;font-weight:normal;color:#111;letter-spacing:0.000px;">Deleted_Key</div>
<div style="position:absolute;left:310.59px;top:391.50px;line-height:0;white-space:pre;font-size:17px;font-weight:normal;color:#111;letter-spacing:0.000px;">DVB_SCRAMBLING</div>
<div style="position:absolute;left:529.63px;top:391.50px;line-height:0;white-space:pre;font-size:17px;font-weight:normal;color:#111;letter-spacing:0.000px;">No</div>
<div style="position:absolute;left:609.27px;top:391.50px;line-height:0;white-space:pre;font-size:17px;font-weight:normal;color:#111;letter-spacing:0.000px;">0</div>
<div style="position:absolute;left:672.77px;top:391.50px;line-height:0;white-space:pre;font-size:17px;font-weight:normal;color:#111;letter-spacing:0.000px;">0</div>
<div style="position:absolute;left:927.27px;top:391.50px;line-height:0;white-space:pre;font-size:17px;font-weight:normal;color:#111;letter-spacing:0.000px;">0</div>
<div style="position:absolute;left:1012.56px;top:391.50px;line-height:0;white-space:pre;font-size:17px;font-weight:normal;color:#111;letter-spacing:0.000px;">Unknown</div>
<div style="position:absolute;left:1206.83px;top:391.50px;line-height:0;white-space:pre;font-size:17px;font-weight:normal;color:#111;letter-spacing:0.000px;">Deleted_Key</div>
<div style="position:absolute;left:282.86px;top:419.50px;line-height:0;white-space:pre;font-size:17px;font-weight:normal;color:#111;letter-spacing:0.000px;">8_CHANNELS_PER_PORT</div>
<div style="position:absolute;left:526.63px;top:419.50px;line-height:0;white-space:pre;font-size:17px;font-weight:normal;color:#111;letter-spacing:0.000px;">Yes</div>
<div style="position:absolute;left:609.27px;top:419.50px;line-height:0;white-space:pre;font-size:17px;font-weight:normal;color:#111;letter-spacing:0.000px;">1</div>
<div style="position:absolute;left:672.77px;top:419.50px;line-height:0;white-space:pre;font-size:17px;font-weight:normal;color:#111;letter-spacing:0.000px;">1</div>
<div style="position:absolute;left:734.29px;top:419.50px;line-height:0;white-space:pre;font-size:17px;font-weight:normal;color:#111;letter-spacing:0.000px;">00-000-0000</div>
<div style="position:absolute;left:927.27px;top:419.50px;line-height:0;white-space:pre;font-size:17px;font-weight:normal;color:#111;letter-spacing:0.000px;">0</div>
<div style="position:absolute;left:1037.13px;top:419.50px;line-height:0;white-space:pre;font-size:17px;font-weight:normal;color:#111;letter-spacing:0.000px;">No</div>
<div style="position:absolute;left:1090.11px;top:419.50px;line-height:0;white-space:pre;font-size:17px;font-weight:normal;color:#111;letter-spacing:0.000px;">2269F1DD04E87CF1EBEB9429A9CE08B5</div>
<div style="position:absolute;left:339.88px;top:447.50px;line-height:0;white-space:pre;font-size:17px;font-weight:normal;color:#111;letter-spacing:0.000px;">POWERKEY</div>
<div style="position:absolute;left:526.63px;top:447.50px;line-height:0;white-space:pre;font-size:17px;font-weight:normal;color:#111;letter-spacing:0.000px;">Yes</div>
<div style="position:absolute;left:609.27px;top:447.50px;line-height:0;white-space:pre;font-size:17px;font-weight:normal;color:#111;letter-spacing:0.000px;">1</div>
<div style="position:absolute;left:672.77px;top:447.50px;line-height:0;white-space:pre;font-size:17px;font-weight:normal;color:#111;letter-spacing:0.000px;">1</div>
<div style="position:absolute;left:734.29px;top:447.50px;line-height:0;white-space:pre;font-size:17px;font-weight:normal;color:#111;letter-spacing:0.000px;">00-000-0000</div>
<div style="position:absolute;left:927.27px;top:447.50px;line-height:0;white-space:pre;font-size:17px;font-weight:normal;color:#111;letter-spacing:0.000px;">0</div>
<div style="position:absolute;left:1037.13px;top:447.50px;line-height:0;white-space:pre;font-size:17px;font-weight:normal;color:#111;letter-spacing:0.000px;">No</div>
<div style="position:absolute;left:1093.55px;top:447.50px;line-height:0;white-space:pre;font-size:17px;font-weight:normal;color:#111;letter-spacing:0.000px;">AC257EFEBB3E5A471311500BA4A01710</div>
<div style="position:absolute;left:565.10px;top:501.50px;line-height:0;white-space:pre;font-size:18.5px;font-weight:bold;color:#0a0a0a;letter-spacing:0.000px;">License File Information</div>
<div style="position:absolute;left:284.00px;top:539.00px;line-height:0;white-space:pre;font-size:18.5px;font-weight:bold;color:#0a0a0a;letter-spacing:0.000px;">License File Path</div>
<div style="position:absolute;left:284.00px;top:580.50px;line-height:0;white-space:pre;font-size:18.5px;font-weight:bold;color:#0a0a0a;letter-spacing:0.000px;">License File Name</div>
<div style="position:absolute;left:481.01px;top:540.50px;line-height:0;white-space:pre;font-size:17px;font-weight:normal;color:#222;letter-spacing:0.000px;transform:scaleX(1.1767);transform-origin:0 0;">/disk1/dvs/dncsftp</div>
<div style="position:absolute;left:484.70px;top:581.00px;line-height:0;white-space:pre;font-size:17px;font-weight:normal;color:#111;letter-spacing:0.882px;">license.dat.00000000AAIWNIR.txt</div>
<div style="position:absolute;left:302.97px;top:621.20px;line-height:0;white-space:pre;font-size:17.5px;font-weight:normal;color:#a9a9a9;letter-spacing:0.000px;transform:scaleX(1.0670);transform-origin:0 0;">Download License</div>
<div style="position:absolute;left:502.98px;top:621.20px;line-height:0;white-space:pre;font-size:17.5px;font-weight:normal;color:#a9a9a9;letter-spacing:0.000px;transform:scaleX(1.0480);transform-origin:0 0;">Cancel</div>
<div style="position:absolute;left:606.21px;top:676.50px;line-height:0;white-space:pre;font-size:18.5px;font-weight:bold;color:#0a0a0a;letter-spacing:0.000px;">License Status</div>
</body></html>
